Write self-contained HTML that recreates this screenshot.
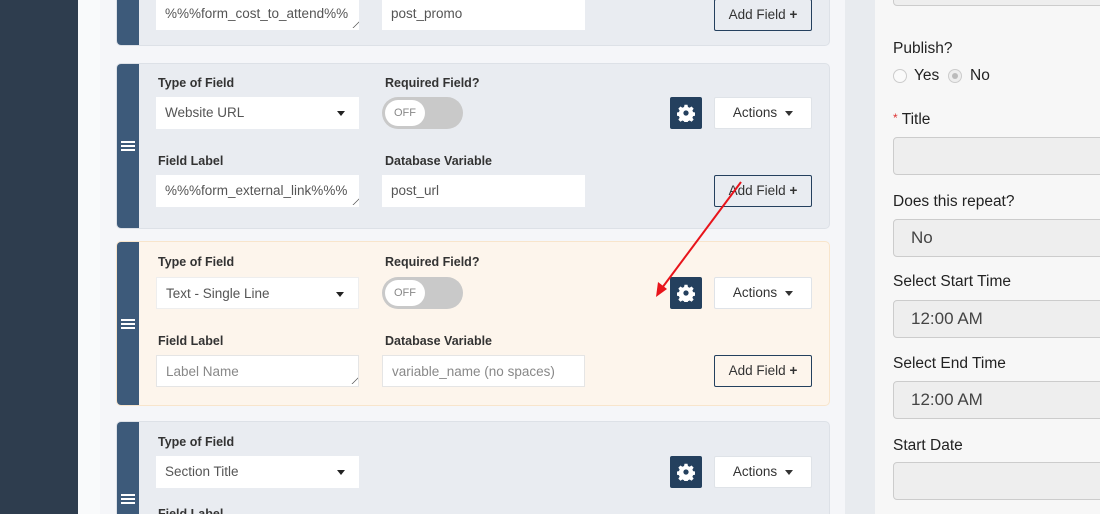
<!DOCTYPE html>
<html style="overflow:hidden;width:1100px;height:514px"><head><meta charset="utf-8"><style>
*{box-sizing:border-box;margin:0;padding:0}
body{width:1100px;height:514px;overflow:hidden;position:relative;background:#f5f6f9;font-family:"Liberation Sans",sans-serif;color:#333}
.sb{position:absolute;left:0;top:0;width:78px;height:514px;background:#2e3d4e}
.gap{position:absolute;left:78px;top:0;width:22px;height:514px;background:#f9fafb}
.strip{position:absolute;left:845px;top:0;width:30px;height:514px;background:#e8ebef}
.rp{position:absolute;left:875px;top:0;width:225px;height:514px;background:#f7f7f7}
.card{position:absolute;left:116px;width:714px;background:#e9ecf1;border:1px solid #dde1e7;border-radius:5px;overflow:hidden}
.card.o{background:#fdf5ec;border-color:#f8e5cc}
.h{position:absolute;left:0;top:0;bottom:0;width:22px;background:#3d5a7a}
.h i{position:absolute;left:4px;width:14px;height:2px;background:#fff}
.a{position:absolute}
.lb{font-size:12.5px;font-weight:bold;color:#333}
.inp{background:#fff;height:32px;font-size:13.5px;color:#555;padding:0 9px;line-height:32px;white-space:nowrap;overflow:hidden}
.ph{color:#888}
.tg{width:81px;height:32px;border-radius:16px;background:#c9c9c9}
.tg b{position:absolute;left:3px;top:3px;width:40px;height:26px;border-radius:13px;background:#fff;font-size:11px;font-weight:normal;color:#888;text-align:center;line-height:26px}
.gear{width:32px;height:32px;background:#24405e;border-radius:2px;display:flex;align-items:center;justify-content:center}
.btn{width:98px;height:32px;background:#fff;border:1px solid #dfe3e8;border-radius:2px;font-size:13.5px;color:#333;text-align:center;line-height:30px}
.btn.o{border-color:#24405e;background:transparent}
.car{display:inline-block;width:0;height:0;border-left:4px solid transparent;border-right:4px solid transparent;border-top:5px solid #333;vertical-align:middle;margin-left:8px}
.sel .car{position:absolute;right:14px;top:14px;border-top-color:#222}
.rs{position:absolute;right:2px;bottom:2px;width:7px;height:7px;border-right:1px solid #555;transform:skewX(-45deg)}
.rl{position:absolute;left:893px;font-size:15.5px;color:#222}
.ri{position:absolute;left:893px;width:220px;height:38px;background:#eee;border:1px solid #ccc;border-radius:4px;font-size:17px;color:#444;padding-left:17px;line-height:36px}
</style></head><body>
<div class="sb"></div><div class="gap"></div><div class="strip"></div><div class="rp"></div>

<!-- card 1 -->
<div class="card" style="top:-116px;height:162px">
<div class="h"></div>
<div class="a inp" style="left:39px;top:113px;width:203px">%%%form_cost_to_attend%%<span class="rs"></span></div>
<div class="a inp" style="left:265px;top:113px;width:203px">post_promo</div>
<div class="a btn o" style="left:597px;top:114px">Add Field <b>+</b></div>
</div>

<!-- card 2 -->
<div class="card" style="top:63px;height:166px">
<div class="h"><i style="top:77px"></i><i style="top:81px"></i><i style="top:85px"></i></div>
<div class="a lb" style="left:41px;top:12px">Type of Field</div>
<div class="a lb" style="left:268px;top:12px">Required Field?</div>
<div class="a inp sel" style="left:39px;top:33px;width:203px">Website URL<span class="car"></span></div>
<div class="a tg" style="left:265px;top:33px"><b>OFF</b></div>
<div class="a gear" style="left:553px;top:33px"><svg width="18" height="18" viewBox="0 0 24 24"><path fill="#fff" d="M10 1h4l.6 3 2.2 1 2.6-1.7 2.8 2.8-1.7 2.6 1 2.2 3 .6v4l-3 .6-1 2.2 1.7 2.6-2.8 2.8-2.6-1.7-2.2 1-.6 3h-4l-.6-3-2.2-1-2.6 1.7-2.8-2.8 1.7-2.6-1-2.2-3-.6v-4l3-.6 1-2.2-1.700-2.6 2.8-2.8 2.6 1.7 2.2-1zM12 8.5a3.5 3.5 0 100 7 3.5 3.5 0 000-7z"/></svg></div>
<div class="a btn" style="left:597px;top:33px">Actions<span class="car"></span></div>
<div class="a lb" style="left:41px;top:90px">Field Label</div>
<div class="a lb" style="left:268px;top:90px">Database Variable</div>
<div class="a inp" style="left:39px;top:111px;width:203px">%%%form_external_link%%%<span class="rs"></span></div>
<div class="a inp" style="left:265px;top:111px;width:203px">post_url</div>
<div class="a btn o" style="left:597px;top:111px">Add Field <b>+</b></div>
</div>

<!-- card 3 -->
<div class="card o" style="top:241px;height:165px">
<div class="h"><i style="top:77px"></i><i style="top:81px"></i><i style="top:85px"></i></div>
<div class="a lb" style="left:41px;top:13px">Type of Field</div>
<div class="a lb" style="left:268px;top:13px">Required Field?</div>
<div class="a inp sel" style="left:39px;top:35px;width:203px;border:1px solid #eee">Text - Single Line<span class="car"></span></div>
<div class="a tg" style="left:265px;top:35px"><b>OFF</b></div>
<div class="a gear" style="left:553px;top:35px"><svg width="18" height="18" viewBox="0 0 24 24"><path fill="#fff" d="M10 1h4l.6 3 2.2 1 2.6-1.7 2.8 2.8-1.7 2.6 1 2.2 3 .6v4l-3 .6-1 2.2 1.7 2.6-2.8 2.8-2.6-1.7-2.2 1-.6 3h-4l-.6-3-2.2-1-2.6 1.7-2.8-2.8 1.7-2.6-1-2.2-3-.6v-4l3-.6 1-2.2-1.7-2.6 2.8-2.8 2.6 1.7 2.2-1zM12 8.5a3.5 3.5 0 100 7 3.5 3.5 0 000-7z"/></svg></div>
<div class="a btn" style="left:597px;top:35px">Actions<span class="car"></span></div>
<div class="a lb" style="left:41px;top:92px">Field Label</div>
<div class="a lb" style="left:268px;top:92px">Database Variable</div>
<div class="a inp ph" style="left:39px;top:113px;width:203px;border:1px solid #e5e5e5">Label Name<span class="rs"></span></div>
<div class="a inp ph" style="left:265px;top:113px;width:203px;border:1px solid #e5e5e5">variable_name (no spaces)</div>
<div class="a btn o" style="left:597px;top:113px">Add Field <b>+</b></div>
</div>

<!-- card 4 -->
<div class="card" style="top:421px;height:100px">
<div class="h"><i style="top:72px"></i><i style="top:76px"></i><i style="top:80px"></i></div>
<div class="a lb" style="left:41px;top:13px">Type of Field</div>
<div class="a inp sel" style="left:39px;top:34px;width:203px">Section Title<span class="car"></span></div>
<div class="a gear" style="left:553px;top:34px"><svg width="18" height="18" viewBox="0 0 24 24"><path fill="#fff" d="M10 1h4l.6 3 2.2 1 2.6-1.7 2.8 2.8-1.7 2.6 1 2.2 3 .6v4l-3 .6-1 2.2 1.7 2.6-2.8 2.8-2.6-1.7-2.2 1-.6 3h-4l-.6-3-2.2-1-2.6 1.7-2.8-2.8 1.7-2.6-1-2.2-3-.6v-4l3-.6 1-2.2-1.7-2.6 2.8-2.8 2.6 1.7 2.2-1zM12 8.5a3.5 3.5 0 100 7 3.5 3.5 0 000-7z"/></svg></div>
<div class="a btn" style="left:597px;top:34px">Actions<span class="car"></span></div>
<div class="a lb" style="left:41px;top:85px">Field Label</div>
</div>

<svg class="a" style="left:0;top:0" width="1100" height="514"><line x1="741" y1="182" x2="662" y2="288" stroke="#e8141b" stroke-width="2"/><path d="M656 297 L658 282 L667 289 Z" fill="#e8141b"/></svg>

<!-- right panel -->
<div class="a" style="left:893px;top:-8px;width:220px;height:14px;border:1px solid #ccc;border-radius:4px;background:#eee"></div>
<div class="rl" style="top:40px">Publish?</div>
<div class="a" style="left:893px;top:69px;width:14px;height:14px;border-radius:50%;border:1px solid #ccc;background:#fafafa"></div>
<div class="rl" style="left:914px;top:67px">Yes</div>
<div class="a" style="left:948px;top:69px;width:14px;height:14px;border-radius:50%;border:1px solid #ccc;background:#eee"><div style="margin:3px;width:6px;height:6px;border-radius:50%;background:#bbb"></div></div>
<div class="rl" style="left:970px;top:67px">No</div>
<div class="rl" style="top:111px"><span style="color:#d33;font-size:12px;vertical-align:top">*</span> Title</div>
<div class="ri" style="top:137px"></div>
<div class="rl" style="top:193px">Does this repeat?</div>
<div class="ri" style="top:219px">No</div>
<div class="rl" style="top:273px">Select Start Time</div>
<div class="ri" style="top:300px">12:00 AM</div>
<div class="rl" style="top:355px">Select End Time</div>
<div class="ri" style="top:381px">12:00 AM</div>
<div class="rl" style="top:437px">Start Date</div>
<div class="ri" style="top:462px"></div>
</body></html>
